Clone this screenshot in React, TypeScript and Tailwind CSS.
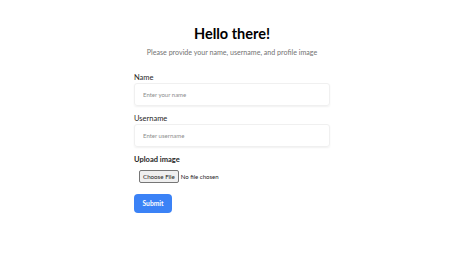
import React from "react";

export default function App() {
  return (
    <div className="min-h-[273px] w-full bg-white pr-[10px]" style={{ fontFamily: "Lato, 'Open Sans', sans-serif" }}>
      <div className="mx-auto w-[196px] pt-[24px]">
        <h1 className="text-center text-[14.5px] font-bold leading-[20px] text-black">Hello there!</h1>
        <p className="mt-[4px] text-center text-[7.1px] leading-[10px] text-[#737373]">
          Please provide your name, username, and profile image
        </p>
        <div className="mt-[14px] flex flex-col">
          <label className="mt-[1px] text-[7.5px] leading-[10px] text-[#262626]">Name</label>
          <input
            className="h-[23px] w-full rounded-[3px] border border-[#f0f0f0] px-[8px] text-[6px] text-[#374151] shadow-[0_1px_2px_rgba(0,0,0,0.06)] outline-none placeholder:text-[#8c8c8c]"
            placeholder="Enter your name"
          />
          <label className="mt-[8px] text-[7.5px] leading-[10px] text-[#262626]">Username</label>
          <input
            className="h-[23px] w-full rounded-[3px] border border-[#f0f0f0] px-[8px] text-[6px] text-[#374151] shadow-[0_1px_2px_rgba(0,0,0,0.06)] outline-none placeholder:text-[#8c8c8c]"
            placeholder="Enter username"
          />
          <label className="mt-[8px] text-[7.5px] font-bold leading-[10px] text-[#262626]">Upload image</label>
          <input
            type="file"
            className="ml-[5px] mt-[5px] text-[6px] text-[#222] file:mr-[2px] file:h-[13px] file:rounded-[2px] file:border file:border-solid file:border-[#767676] file:bg-[#efefef] file:px-[3px] file:text-[6.2px] file:text-[#222]"
          />
          <div className="mt-[5px]">
            <button className="h-[19px] w-[38px] rounded-[4px] bg-[#3b82f6] text-[6.7px] font-bold text-white">Submit</button>
          </div>
        </div>
      </div>
    </div>
  );
}
